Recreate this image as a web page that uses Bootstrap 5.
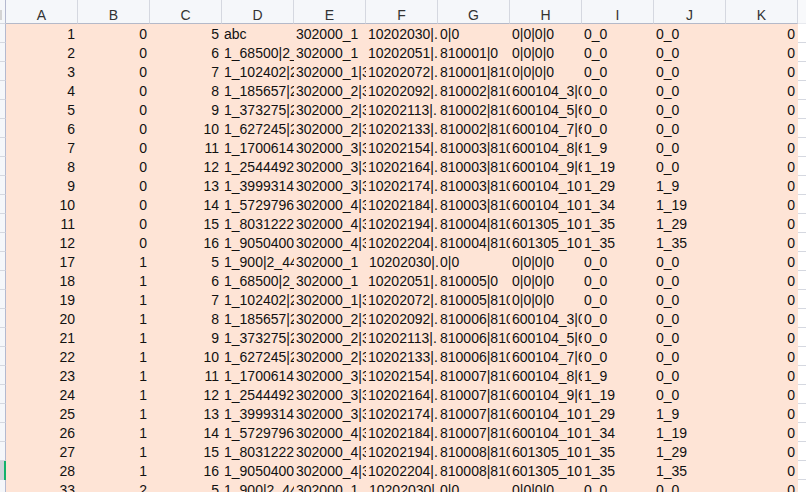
<!DOCTYPE html>
<html lang="en">
<head>
<meta charset="utf-8">
<title>Sheet</title>
<link rel="stylesheet" href="https://cdn.jsdelivr.net/npm/bootstrap@5.3.0/dist/css/bootstrap.min.css">
<style>
html, body { height: 100%; overflow: hidden; background: #fff; }
.sheet-wrap { width: 806px; height: 492px; overflow: hidden; }
.sheet { table-layout: fixed; border-collapse: separate; border-spacing: 0; width: 806px; font: 14px/17px "Liberation Sans", Arial, sans-serif; color: #111; }
.sheet th, .sheet td { padding: 0; overflow: hidden; white-space: nowrap; }
.sheet thead th { height: 24px; background: #f5f7fa; font-weight: 400; text-align: center; border-bottom: 1px solid #b4b9c9; border-right: 1px solid #d5d8e0; color: #333; padding-top: 7px; line-height: 16px; vertical-align: top; }
.sheet td { height: 19px; background: #fee4d6; padding: 2px 2px 0 2px; }
.sheet td.num { text-align: right; padding-right: 3px; }
.sheet .gut { width: 6px; background: #f5f7fa; padding: 0; border-right: 1px solid #b4b9cf; border-bottom: 1px solid #d5d8e0; }
.sheet thead .gut { background: linear-gradient(#d4d4d4, #d4d4d4) 0 10px / 2px 10px no-repeat, #f5f7fa; border-right: 1px solid #b4b9cf; padding: 0; }
.sheet td.gut { padding: 0; }
.sheet td.gut.on { background: linear-gradient(90deg, #cdd3d9 4px, #13b26b 4px); border-right: 0; border-bottom: 0; }
.sheet td.tail { width: 8px; background: #fff; border-bottom: 1px solid #d5d8e0; padding: 0; }
.sheet thead .tail { background: #f8f9fb; border-right: 0; border-bottom-color: #e8eaef; }
.sheet td.inset { padding-left: 3px; }
.sheet td.fcol { padding-left: 3px; }
</style>
</head>
<body>
<div class="sheet-wrap">
<table class="sheet"><colgroup><col style="width:6px"><col style="width:72px"><col style="width:72px"><col style="width:72px"><col style="width:72px"><col style="width:72px"><col style="width:72px"><col style="width:72px"><col style="width:72px"><col style="width:72px"><col style="width:72px"><col style="width:72px"><col style="width:8px"></colgroup>
<thead><tr><th class="gut"></th><th>A</th><th>B</th><th>C</th><th>D</th><th>E</th><th>F</th><th>G</th><th>H</th><th>I</th><th>J</th><th>K</th><th class="tail"></th></tr></thead>
<tbody id="rows"></tbody></table>
</div>
<script>
const D=['1_68500|2_1','1_102402|2_1','1_185657|2_1','1_373275|2_1','1_627245|2_1','1_1700614|2','1_2544492|2','1_3999314|2','1_5729796|2','1_8031222|2','1_9050400|2'];
const E=['302000_1','302000_1','302000_1|3','302000_2|3','302000_2|3','302000_2|3','302000_3|3','302000_3|3','302000_3|3','302000_4|3','302000_4|3','302000_4|3'];
const F=['10202030|.','10202051|.','10202072|.','10202092|.','10202113|.','10202133|.','10202154|.','10202164|.','10202174|.','10202184|.','10202194|.','10202204|.'];
const H=['0|0|0|0','0|0|0|0','0|0|0|0','600104_3|0','600104_5|6','600104_7|6','600104_8|6','600104_9|6','600104_10|6','600104_10|6','601305_10|6','601305_10|6'];
const I=['0_0','0_0','0_0','0_0','0_0','0_0','1_9','1_19','1_29','1_34','1_35','1_35'];
const J=['0_0','0_0','0_0','0_0','0_0','0_0','0_0','0_0','1_9','1_19','1_29','1_35'];
function G(b,i){const n=[1,1,1,2,2,2,3,3,3,3,4,4][i]+b*4;const p='81000'+n;return i==0?'0|0':i==1?p+'|0':p+'|810';}
let h='';
function row(a,b,i,d,on){
 const f=(b>0&&i==0)?' class="inset"':'';
 h+=`<tr><td class="gut${on?' on':''}"></td><td class="num">${a}</td><td class="num">${b}</td><td class="num">${5+i}</td><td>${d}</td><td>${E[i]}</td><td${f}>${F[i]}</td><td>${G(b,i)}</td><td>${H[i]}</td><td>${I[i]}</td><td>${J[i]}</td><td class="num">0</td><td class="tail"></td></tr>`;
}
for(let i=0;i<12;i++)row(1+i,0,i,i==0?'abc':D[i-1]);
for(let i=0;i<12;i++)row(17+i,1,i,i==0?'1_900|2_44':D[i-1],i==11);
row(33,2,0,'1_900|2_44');
document.getElementById('rows').innerHTML=h;
</script>
<script src="https://cdn.jsdelivr.net/npm/bootstrap@5.3.0/dist/js/bootstrap.bundle.min.js"></script>
</body>
</html>
